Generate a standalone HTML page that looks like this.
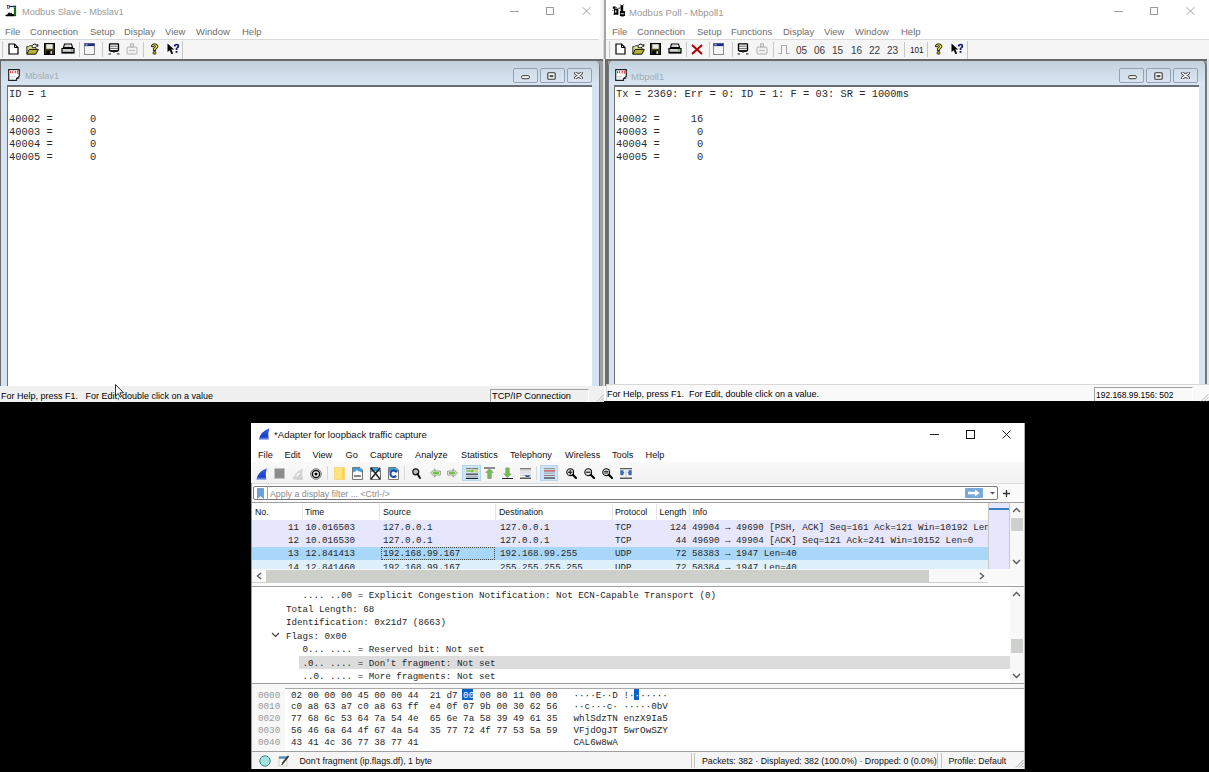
<!DOCTYPE html>
<html><head><meta charset="utf-8">
<style>
*{margin:0;padding:0;box-sizing:border-box}
html,body{width:1209px;height:772px;overflow:hidden;background:#000}
body{position:relative;font-family:"Liberation Sans",sans-serif;}
.a{position:absolute}
.t{position:absolute;white-space:pre;line-height:1}
.mono{font-family:"Liberation Mono",monospace}
.win{position:absolute;background:#fff;overflow:hidden}
.ttl{color:#9a9a9a;font-size:9.3px}
.menu{color:#6e6e6e;font-size:9.5px}
.tb{background:#f5f5f5}
.sep{position:absolute;width:1px;background:#c8c8c8}
.mdibtn{position:absolute;width:25px;height:15px;border:1px solid #93a3b5;border-radius:2px;background:linear-gradient(#cfdbe7,#d9e5f1)}
.reg{font-size:10.4px;color:#2b2b2b}
.stat{font-size:9px;color:#000}
.wsm{font-size:9.2px;color:#111}
.wsh{font-size:8.8px;color:#111}
.hs{top:504px;width:1px;height:16px;background:#e4e4e4}
.wsr{font-family:"Liberation Mono",monospace;font-size:9.2px;color:#262626}
.wss{font-size:8.8px;color:#111}
</style></head><body>

<!-- ================= MODBUS SLAVE ================= -->
<div class="win" style="left:0;top:0;width:604px;height:402px;">
  <!-- title bar -->
  <div class="t ttl" style="left:22px;top:7.8px;">Modbus Slave - Mbslav1</div>
  <!-- title buttons -->
  <div class="a" style="left:510px;top:11px;width:9px;height:1px;background:#a0a0a0"></div>
  <div class="a" style="left:546px;top:7px;width:8px;height:8px;border:1px solid #9a9a9a"></div>
  <svg class="a" style="left:582px;top:7px" width="9" height="8"><path d="M0.5 0.2L8.5 7.8M8.5 0.2L0.5 7.8" stroke="#9a9a9a" stroke-width="0.9"/></svg>
  <!-- menu -->
  <div class="t menu" style="left:5px;top:26.8px;">File</div>
  <div class="t menu" style="left:30px;top:26.8px;">Connection</div>
  <div class="t menu" style="left:90px;top:26.8px;">Setup</div>
  <div class="t menu" style="left:124px;top:26.8px;">Display</div>
  <div class="t menu" style="left:165px;top:26.8px;">View</div>
  <div class="t menu" style="left:196px;top:26.8px;">Window</div>
  <div class="t menu" style="left:242px;top:26.8px;">Help</div>
  <div class="a" style="left:0;top:39px;width:604px;height:1px;background:#dadada"></div>
  <!-- toolbar -->
  <div class="a tb" style="left:0;top:40px;width:604px;height:19px;"></div>
  <div class="sep" style="left:2px;top:41px;height:17px"></div>
  <div class="sep" style="left:79px;top:42px;height:15px"></div>
  <div class="sep" style="left:102px;top:42px;height:15px"></div>
  <div class="sep" style="left:143px;top:42px;height:15px"></div>
  <div class="sep" style="left:182px;top:41px;height:18px"></div>
  <!-- MDI area -->
  <div class="a" style="left:0;top:59px;width:604px;height:327px;background:#a0a0a0;border-top:2px solid #6a6a6a"></div>
  <div class="a" style="left:0;top:61px;width:600px;height:325px;background:#d6e4f1;border-right:1px solid #70777d;border-radius:0 5px 0 0"></div>
  <div class="a" style="left:0;top:61px;width:599px;height:24px;background:linear-gradient(#c3d1dd,#d9e6f3);border-radius:0 5px 0 0"></div>
  <div class="a" style="left:0;top:59px;width:1px;height:327px;background:#6a6a6a"></div>
  <div class="a" style="left:603px;top:40px;width:1px;height:346px;background:#d8d8d8"></div>
  <div class="t ttl" style="left:25px;top:72.2px;color:#a4acb4;font-size:9.15px">Mbslav1</div>
  <div class="mdibtn" style="left:513px;top:68px;"></div>
  <div class="mdibtn" style="left:540px;top:68px;"></div>
  <div class="mdibtn" style="left:567px;top:68px;"></div>
  <!-- client -->
  <div class="a" style="left:7px;top:85px;width:585px;height:301px;background:#fff;border-top:2px solid #6b6f74;border-left:1px solid #6b6f74"></div>
  <div class="t mono reg" style="left:9px;top:89px;">ID = 1</div>
  <div class="t mono reg" style="left:9px;top:114px;">40002 =      0</div>
  <div class="t mono reg" style="left:9px;top:127px;">40003 =      0</div>
  <div class="t mono reg" style="left:9px;top:139px;">40004 =      0</div>
  <div class="t mono reg" style="left:9px;top:152px;">40005 =      0</div>
  <!-- status bar -->
  <div class="a" style="left:0;top:386px;width:604px;height:16px;background:#f0f0f0"></div>
  <div class="t stat" style="left:1px;top:392px;">For Help, press F1.   For Edit, double click on a value</div>
  <div class="a" style="left:490px;top:389px;width:99px;height:13px;border-top:1px solid #a0a0a0;border-left:1px solid #a0a0a0;border-right:1px solid #fff"></div>
  <div class="t stat" style="left:492px;top:392px;font-size:9.25px">TCP/IP Connection</div>
</div>

<svg class="a" style="left:5px;top:5px" width="12" height="12" viewBox="0 0 12 12"><rect x="2.5" y="0.6" width="1.8" height="2.6" fill="#c8d8d0" stroke="#222" stroke-width="0.6"/><path d="M4.3 1.5H9" stroke="#1a1a80" stroke-width="1.2"/><rect x="8.9" y="0.6" width="2.2" height="10.6" fill="#0a5a10"/><path d="M10 2V10" stroke="#7c7" stroke-width="0.7" stroke-dasharray="1 1.2"/><path d="M0 10.3L2.6 9.2L4.2 7L5.1 8.4L6.2 7.6L7 8.8L9 9.3V11.2H1.2Z" fill="#000"/></svg><svg class="a" style="left:8px;top:43px" width="11" height="12" viewBox="0 0 11 12"><path d="M1 1H6.5L10 4.5V11H1Z" fill="#fff" stroke="#000" stroke-width="1.2"/><path d="M6.5 1V4.5H10" fill="none" stroke="#000" stroke-width="1"/></svg><svg class="a" style="left:26px;top:43px" width="13" height="12" viewBox="0 0 13 12"><path d="M0.8 11V3.6H2.6L3.5 2.7H6.2V4.6H10V6.2" fill="#e4e48a" stroke="#222" stroke-width="0.9"/><path d="M0.8 11.2L3.2 6.4H12.4L9.8 11.2Z" fill="#b4b436" stroke="#111" stroke-width="1"/><path d="M6.3 2.4Q8 0.2 10.2 1.4L11.2 2.8" fill="none" stroke="#111" stroke-width="1"/><path d="M9.7 3L12 3.3L11.7 1" fill="none" stroke="#111" stroke-width="0.9"/></svg><svg class="a" style="left:44px;top:43px" width="11" height="12" viewBox="0 0 11 12"><rect x="0.6" y="0.6" width="9.8" height="10.8" fill="#4a4a10" stroke="#000" stroke-width="1.2"/><rect x="2.3" y="1.2" width="6.4" height="4.6" fill="#e8e8e8"/><rect x="2.3" y="7.5" width="6" height="3.9" fill="#000"/><rect x="6.4" y="8.2" width="1.6" height="2.6" fill="#ddd"/></svg><svg class="a" style="left:61px;top:43px" width="14" height="12" viewBox="0 0 14 12"><path d="M3.5 1H10.5L11.5 4.5H2.5Z" fill="#fff" stroke="#000" stroke-width="1.1"/><path d="M1 5.5H13V10H1Z" fill="#d0d0d0" stroke="#000" stroke-width="1.2"/><path d="M1 9.5H13" stroke="#000" stroke-width="1.4"/><path d="M4 3H9" stroke="#888" stroke-width="0.8"/><rect x="10" y="6.5" width="1.5" height="1" fill="#0a0"/></svg><svg class="a" style="left:84px;top:43px" width="11" height="12" viewBox="0 0 11 12"><rect x="0.5" y="0.5" width="10" height="11" fill="#f4f4f4" stroke="#8a8a8a" stroke-width="1"/><rect x="0.5" y="0.5" width="10" height="2.6" fill="#1c2a8c"/><rect x="1.5" y="1.4" width="2" height="0.9" fill="#fff"/></svg><svg class="a" style="left:107px;top:43px" width="14" height="12" viewBox="0 0 14 12"><rect x="2.5" y="0.8" width="9" height="7" rx="0.5" fill="#eee" stroke="#000" stroke-width="1.3"/><path d="M3 3.3H11M3 5.5H11" stroke="#7a7a7a" stroke-width="1.1"/><path d="M3.5 8.2H10.5" stroke="#000" stroke-width="1.4"/><path d="M6 9.2H8" stroke="#555" stroke-width="1"/><rect x="1.5" y="10.4" width="2.5" height="1.1" fill="#333"/><rect x="10" y="10.4" width="2.5" height="1.1" fill="#333"/></svg><svg class="a" style="left:126px;top:43px" width="12" height="12" viewBox="0 0 12 12"><rect x="1" y="4" width="10" height="7" rx="1" fill="#f2f2f2" stroke="#b0b0b0" stroke-width="1"/><rect x="4.5" y="0.8" width="3" height="3.2" fill="#e0e0e0" stroke="#b0b0b0" stroke-width="0.9"/><path d="M3 7.5H9" stroke="#c0c0c0" stroke-width="1.2"/></svg><svg class="a" style="left:150px;top:43px" width="9" height="12" viewBox="0 0 9 12"><path d="M1.3 3.6Q1.3 0.8 4.5 0.8Q7.8 0.8 7.8 3.5Q7.8 5.2 5.6 6.3V7.6H3.4V5.4Q5.4 4.6 5.4 3.6Q5.4 2.6 4.5 2.6Q3.6 2.6 3.6 3.8Z" fill="#e8e840" stroke="#000" stroke-width="0.9"/><rect x="3.2" y="8.7" width="2.6" height="2.4" rx="0.6" fill="#e8e840" stroke="#000" stroke-width="0.9"/></svg><svg class="a" style="left:167px;top:43px" width="13" height="12" viewBox="0 0 13 12"><path d="M0.5 0.5V9L2.6 7.2L4.6 11.3L6.2 10.5L4.3 6.6H7.2Z" fill="#000"/><path d="M6.8 3.4Q6.8 0.8 9.5 0.8Q12.2 0.8 12.2 3.2Q12.2 4.8 10.4 5.6V7H8.7V4.9Q10.4 4.2 10.4 3.2Q10.4 2.3 9.5 2.3Q8.6 2.3 8.6 3.5Z" fill="#1a1a80"/><rect x="8.6" y="8" width="1.9" height="1.8" fill="#1a1a80"/></svg><svg class="a" style="left:8px;top:69px" width="12" height="12" viewBox="0 0 12 12"><path d="M0.7 0.7H11.3V7.3L8.5 9.8V11.3H0.7Z" fill="#fff" stroke="#222" stroke-width="1.2"/><path d="M8.5 11.3V9.2H11.3" fill="none" stroke="#222" stroke-width="1"/><path d="M2 2.2H2.9V4.2H2Z" fill="#e02030"/><path d="M5.2 2.2L3.8 3.2L5.2 4.2M8 2.2L6.6 3.2L8 4.2M10.6 2.2H9.4V4.2H10.6" fill="none" stroke="#e02030" stroke-width="0.9"/><path d="M2 7.5H7M2 9H6" stroke="#c8c8c8" stroke-width="0.7"/></svg><svg class="a" style="left:521px;top:75px" width="9" height="5" viewBox="0 0 9 5"><rect x="0.7" y="0.7" width="7.6" height="3" rx="1" fill="#fff" stroke="#333" stroke-width="1"/></svg><svg class="a" style="left:547px;top:72px" width="9" height="8" viewBox="0 0 9 8"><rect x="0.8" y="0.8" width="7.4" height="6.4" rx="1" fill="#fff" stroke="#333" stroke-width="1.1"/><rect x="2.6" y="3" width="3.8" height="2.2" fill="#555"/></svg><svg class="a" style="left:574px;top:72px" width="9" height="7" viewBox="0 0 9 7"><path d="M1.5 1L7.5 6M7.5 1L1.5 6" stroke="#444" stroke-width="3.2" stroke-linecap="round"/><path d="M1.5 1L7.5 6M7.5 1L1.5 6" stroke="#fff" stroke-width="1.6" stroke-linecap="round"/></svg><svg class="a" style="left:595px;top:392px" width="10" height="10" viewBox="0 0 10 10"><path d="M9.5 2L2 9.5M9.5 5L5 9.5M9.5 8L8 9.5" stroke="#b0b0b0" stroke-width="0.9"/></svg>
<!-- ================= MODBUS POLL ================= -->
<div class="win" style="left:604px;top:0;width:605px;height:401px;">
  <div class="t ttl" style="left:25px;top:7.6px;font-size:9.55px">Modbus Poll - Mbpoll1</div>
  <div class="a" style="left:510px;top:11px;width:9px;height:1px;background:#a0a0a0"></div>
  <div class="a" style="left:546px;top:7px;width:8px;height:8px;border:1px solid #9a9a9a"></div>
  <svg class="a" style="left:582px;top:7px" width="9" height="8"><path d="M0.5 0.2L8.5 7.8M8.5 0.2L0.5 7.8" stroke="#9a9a9a" stroke-width="0.9"/></svg>
  <div class="t menu" style="left:8px;top:26.8px;">File</div>
  <div class="t menu" style="left:33px;top:26.8px;">Connection</div>
  <div class="t menu" style="left:93px;top:26.8px;">Setup</div>
  <div class="t menu" style="left:127px;top:26.8px;">Functions</div>
  <div class="t menu" style="left:179px;top:26.8px;">Display</div>
  <div class="t menu" style="left:220px;top:26.8px;">View</div>
  <div class="t menu" style="left:251px;top:26.8px;">Window</div>
  <div class="t menu" style="left:297px;top:26.8px;">Help</div>
  <div class="a" style="left:0;top:39px;width:605px;height:1px;background:#dadada"></div>
  <div class="a tb" style="left:0;top:40px;width:605px;height:19px;"></div>
  <div class="sep" style="left:5px;top:41px;height:17px"></div>
  <div class="sep" style="left:82px;top:42px;height:15px"></div>
  <div class="sep" style="left:105px;top:42px;height:15px"></div>
  <div class="sep" style="left:128px;top:42px;height:15px"></div>
  <div class="sep" style="left:169px;top:42px;height:15px"></div>
  <div class="sep" style="left:300px;top:42px;height:15px"></div>
  <div class="sep" style="left:323px;top:42px;height:15px"></div>
  <div class="sep" style="left:363px;top:41px;height:18px"></div>
  <div class="t" style="left:191.9px;top:44.5px;font-size:11.4px;color:#3a3a3a;transform:scaleX(0.88);transform-origin:0 0">05</div>
  <div class="t" style="left:209.8px;top:44.5px;font-size:11.4px;color:#3a3a3a;transform:scaleX(0.88);transform-origin:0 0">06</div>
  <div class="t" style="left:228.4px;top:44.5px;font-size:11.4px;color:#3a3a3a;transform:scaleX(0.88);transform-origin:0 0">15</div>
  <div class="t" style="left:247.0px;top:44.5px;font-size:11.4px;color:#3a3a3a;transform:scaleX(0.88);transform-origin:0 0">16</div>
  <div class="t" style="left:264.8px;top:44.5px;font-size:11.4px;color:#3a3a3a;transform:scaleX(0.88);transform-origin:0 0">22</div>
  <div class="t" style="left:282.7px;top:44.5px;font-size:11.4px;color:#3a3a3a;transform:scaleX(0.88);transform-origin:0 0">23</div>
  <div class="t" style="left:306px;top:46px;font-size:8.6px;color:#111;font-weight:normal;transform:scaleX(0.95);transform-origin:0 0">101</div>
  <!-- MDI -->
  <div class="a" style="left:0;top:59px;width:605px;height:327px;background:#a0a0a0;border-top:2px solid #6a6a6a"></div>
  <div class="a" style="left:0;top:59px;width:1px;height:327px;background:#e6e6e6"></div>
  <div class="a" style="left:1px;top:59px;width:3px;height:327px;background:#6a6a6a"></div>
  <div class="a" style="left:4px;top:61px;width:599px;height:325px;background:#d6e4f1;border-left:1px solid #70777d;border-right:2px solid #70777d;border-radius:5px 5px 0 0"></div>
  <div class="a" style="left:5px;top:61px;width:596px;height:24px;background:linear-gradient(#c3d1dd,#d9e6f3);border-radius:5px 5px 0 0"></div>
  <div class="a" style="left:603px;top:59px;width:2px;height:327px;background:#e6e6e6"></div>
  <div class="t ttl" style="left:27px;top:71.8px;color:#a4acb4;font-size:9.5px">Mbpoll1</div>
  <div class="mdibtn" style="left:515px;top:68px;"></div>
  <div class="mdibtn" style="left:542px;top:68px;"></div>
  <div class="mdibtn" style="left:569px;top:68px;"></div>
  <div class="a" style="left:10px;top:85px;width:585px;height:301px;background:#fff;border-top:2px solid #6b6f74;border-left:1px solid #6b6f74"></div>
  <div class="t mono reg" style="left:12px;top:89px;">Tx = 2369: Err = 0: ID = 1: F = 03: SR = 1000ms</div>
  <div class="t mono reg" style="left:12px;top:114px;">40002 =     16</div>
  <div class="t mono reg" style="left:12px;top:127px;">40003 =      0</div>
  <div class="t mono reg" style="left:12px;top:139px;">40004 =      0</div>
  <div class="t mono reg" style="left:12px;top:152px;">40005 =      0</div>
  <div class="a" style="left:1.5px;top:384px;width:604px;height:18px;background:#f9f9f9;border-top:1px solid #d8d8d8;border-left:1px solid #d8d8d8"></div>
  <div class="t stat" style="left:3px;top:390px;">For Help, press F1.  For Edit, double click on a value.</div>
  <div class="a" style="left:490px;top:387px;width:99px;height:15px;border-top:1px solid #a0a0a0;border-left:1px solid #a0a0a0;border-right:1px solid #fff"></div>
  <div class="t stat" style="left:492px;top:390px;font-size:9.4px;transform:scaleX(0.9);transform-origin:0 0">192.168.99.156: 502</div>
</div>

<div class="a" style="left:604px;top:0;width:2px;height:59px;background:#a4a4a4"></div><div class="a" style="left:599px;top:0;width:5px;height:40px;background:linear-gradient(90deg,#fff,#ececec)"></div>
<svg class="a" style="left:115px;top:384px" width="9" height="14" viewBox="0 0 9 14"><path d="M0.5 0.5V12L3.2 9.4L5 13.2L6.6 12.5L4.9 8.8H8.5Z" fill="#fff" stroke="#000" stroke-width="0.8"/></svg>
<svg class="a" style="left:611.5px;top:3.5px" width="14" height="14" viewBox="0 0 14 14"><rect x="0.8" y="2.5" width="2.6" height="2.3" fill="#000"/><rect x="0.4" y="6" width="0.9" height="0.9" fill="#000"/><path d="M2 4.8H6.4V10.8H1.4V9.7H2Z" fill="#000"/><rect x="3.1" y="6.3" width="1.3" height="2.2" fill="#fff"/><path d="M3.2 2.6L5.2 4.6" stroke="#000" stroke-width="0.9"/><path d="M6.3 4.4L8.5 3.8" stroke="#000" stroke-width="0.9"/><rect x="8.6" y="1.2" width="2.6" height="6.4" fill="#000"/><path d="M8 0.4L8.8 1.4M11.8 0.4L11 1.4" stroke="#000" stroke-width="0.9"/><rect x="7.9" y="7.1" width="5.1" height="4.9" rx="0.6" fill="#000"/><rect x="8.6" y="9.3" width="3.7" height="1" fill="#ddd"/><rect x="8.8" y="12" width="3.2" height="0.9" fill="#888"/></svg><svg class="a" style="left:615px;top:43px" width="11" height="12" viewBox="0 0 11 12"><path d="M1 1H6.5L10 4.5V11H1Z" fill="#fff" stroke="#000" stroke-width="1.2"/><path d="M6.5 1V4.5H10" fill="none" stroke="#000" stroke-width="1"/></svg><svg class="a" style="left:632px;top:43px" width="13" height="12" viewBox="0 0 13 12"><path d="M0.8 11V3.6H2.6L3.5 2.7H6.2V4.6H10V6.2" fill="#e4e48a" stroke="#222" stroke-width="0.9"/><path d="M0.8 11.2L3.2 6.4H12.4L9.8 11.2Z" fill="#b4b436" stroke="#111" stroke-width="1"/><path d="M6.3 2.4Q8 0.2 10.2 1.4L11.2 2.8" fill="none" stroke="#111" stroke-width="1"/><path d="M9.7 3L12 3.3L11.7 1" fill="none" stroke="#111" stroke-width="0.9"/></svg><svg class="a" style="left:650px;top:43px" width="11" height="12" viewBox="0 0 11 12"><rect x="0.6" y="0.6" width="9.8" height="10.8" fill="#4a4a10" stroke="#000" stroke-width="1.2"/><rect x="2.3" y="1.2" width="6.4" height="4.6" fill="#e8e8e8"/><rect x="2.3" y="7.5" width="6" height="3.9" fill="#000"/><rect x="6.4" y="8.2" width="1.6" height="2.6" fill="#ddd"/></svg><svg class="a" style="left:668px;top:43px" width="14" height="12" viewBox="0 0 14 12"><path d="M3.5 1H10.5L11.5 4.5H2.5Z" fill="#fff" stroke="#000" stroke-width="1.1"/><path d="M1 5.5H13V10H1Z" fill="#d0d0d0" stroke="#000" stroke-width="1.2"/><path d="M1 9.5H13" stroke="#000" stroke-width="1.4"/><path d="M4 3H9" stroke="#888" stroke-width="0.8"/><rect x="10" y="6.5" width="1.5" height="1" fill="#0a0"/></svg><svg class="a" style="left:691px;top:44px" width="12" height="11" viewBox="0 0 12 11"><path d="M1 1L11 10M11 1L1 10" stroke="#b00000" stroke-width="2"/></svg><svg class="a" style="left:713px;top:43px" width="11" height="12" viewBox="0 0 11 12"><rect x="0.5" y="0.5" width="10" height="11" fill="#f4f4f4" stroke="#8a8a8a" stroke-width="1"/><rect x="0.5" y="0.5" width="10" height="2.6" fill="#1c2a8c"/><rect x="1.5" y="1.4" width="2" height="0.9" fill="#fff"/></svg><svg class="a" style="left:736px;top:43px" width="14" height="12" viewBox="0 0 14 12"><rect x="2.5" y="0.8" width="9" height="7" rx="0.5" fill="#eee" stroke="#000" stroke-width="1.3"/><path d="M3 3.3H11M3 5.5H11" stroke="#7a7a7a" stroke-width="1.1"/><path d="M3.5 8.2H10.5" stroke="#000" stroke-width="1.4"/><path d="M6 9.2H8" stroke="#555" stroke-width="1"/><rect x="1.5" y="10.4" width="2.5" height="1.1" fill="#333"/><rect x="10" y="10.4" width="2.5" height="1.1" fill="#333"/></svg><svg class="a" style="left:756px;top:43px" width="12" height="12" viewBox="0 0 12 12"><rect x="1" y="4" width="10" height="7" rx="1" fill="#f2f2f2" stroke="#b0b0b0" stroke-width="1"/><rect x="4.5" y="0.8" width="3" height="3.2" fill="#e0e0e0" stroke="#b0b0b0" stroke-width="0.9"/><path d="M3 7.5H9" stroke="#c0c0c0" stroke-width="1.2"/></svg><svg class="a" style="left:778px;top:44px" width="12" height="11" viewBox="0 0 12 11"><path d="M0.5 9.5H3.5V1.5H8.5V9.5H11.5" fill="none" stroke="#a8a8a8" stroke-width="1.1"/></svg><svg class="a" style="left:934px;top:43px" width="9" height="12" viewBox="0 0 9 12"><path d="M1.3 3.6Q1.3 0.8 4.5 0.8Q7.8 0.8 7.8 3.5Q7.8 5.2 5.6 6.3V7.6H3.4V5.4Q5.4 4.6 5.4 3.6Q5.4 2.6 4.5 2.6Q3.6 2.6 3.6 3.8Z" fill="#e8e840" stroke="#000" stroke-width="0.9"/><rect x="3.2" y="8.7" width="2.6" height="2.4" rx="0.6" fill="#e8e840" stroke="#000" stroke-width="0.9"/></svg><svg class="a" style="left:951px;top:43px" width="13" height="12" viewBox="0 0 13 12"><path d="M0.5 0.5V9L2.6 7.2L4.6 11.3L6.2 10.5L4.3 6.6H7.2Z" fill="#000"/><path d="M6.8 3.4Q6.8 0.8 9.5 0.8Q12.2 0.8 12.2 3.2Q12.2 4.8 10.4 5.6V7H8.7V4.9Q10.4 4.2 10.4 3.2Q10.4 2.3 9.5 2.3Q8.6 2.3 8.6 3.5Z" fill="#1a1a80"/><rect x="8.6" y="8" width="1.9" height="1.8" fill="#1a1a80"/></svg><svg class="a" style="left:615px;top:69px" width="12" height="12" viewBox="0 0 12 12"><path d="M0.7 0.7H11.3V7.3L8.5 9.8V11.3H0.7Z" fill="#fff" stroke="#222" stroke-width="1.2"/><path d="M8.5 11.3V9.2H11.3" fill="none" stroke="#222" stroke-width="1"/><path d="M2 2.2H2.9V4.2H2Z" fill="#e02030"/><path d="M5.2 2.2L3.8 3.2L5.2 4.2M8 2.2L6.6 3.2L8 4.2M10.6 2.2H9.4V4.2H10.6" fill="none" stroke="#e02030" stroke-width="0.9"/><path d="M2 7.5H7M2 9H6" stroke="#c8c8c8" stroke-width="0.7"/></svg><svg class="a" style="left:1128px;top:75px" width="9" height="5" viewBox="0 0 9 5"><rect x="0.7" y="0.7" width="7.6" height="3" rx="1" fill="#fff" stroke="#333" stroke-width="1"/></svg><svg class="a" style="left:1154px;top:72px" width="9" height="8" viewBox="0 0 9 8"><rect x="0.8" y="0.8" width="7.4" height="6.4" rx="1" fill="#fff" stroke="#333" stroke-width="1.1"/><rect x="2.6" y="3" width="3.8" height="2.2" fill="#555"/></svg><svg class="a" style="left:1181px;top:72px" width="9" height="7" viewBox="0 0 9 7"><path d="M1.5 1L7.5 6M7.5 1L1.5 6" stroke="#444" stroke-width="3.2" stroke-linecap="round"/><path d="M1.5 1L7.5 6M7.5 1L1.5 6" stroke="#fff" stroke-width="1.6" stroke-linecap="round"/></svg><svg class="a" style="left:1199px;top:392px" width="10" height="10" viewBox="0 0 10 10"><path d="M9.5 2L2 9.5M9.5 5L5 9.5M9.5 8L8 9.5" stroke="#b0b0b0" stroke-width="0.9"/></svg>
<!-- ================= WIRESHARK ================= -->
<div class="a" style="left:251px;top:423px;width:774px;height:346px;background:#fff"></div>
<div class="t" style="left:274px;top:430px;font-size:9.6px;color:#111">*Adapter for loopback traffic capture</div>
<div class="a" style="left:930px;top:434px;width:8.5px;height:1px;background:#222"></div>
<div class="a" style="left:966px;top:430px;width:8.5px;height:8.5px;border:1px solid #111"></div>
<svg class="a" style="left:1002px;top:430px" width="9" height="9"><path d="M0.5 0.5L8.5 8.5M8.5 0.5L0.5 8.5" stroke="#222" stroke-width="1"/></svg>
<!-- menu -->
<div class="t wsm" style="left:258px;top:451px">File</div>
<div class="t wsm" style="left:284.5px;top:451px">Edit</div>
<div class="t wsm" style="left:312.5px;top:451px">View</div>
<div class="t wsm" style="left:345.5px;top:451px">Go</div>
<div class="t wsm" style="left:370px;top:451px">Capture</div>
<div class="t wsm" style="left:415px;top:451px">Analyze</div>
<div class="t wsm" style="left:461px;top:451px">Statistics</div>
<div class="t wsm" style="left:510px;top:451px">Telephony</div>
<div class="t wsm" style="left:565px;top:451px">Wireless</div>
<div class="t wsm" style="left:612px;top:451px">Tools</div>
<div class="t wsm" style="left:645.5px;top:451px">Help</div>
<!-- toolbar -->
<div class="a" style="left:251px;top:462px;width:774px;height:22px;background:linear-gradient(#f9f9f9,#f2f2f2)"></div>
<div class="a" style="left:462px;top:465px;width:19px;height:16px;background:#cce4f7;border:1px solid #b5d5ee"></div>
<div class="a" style="left:540px;top:465px;width:18px;height:16px;background:#cce4f7;border:1px solid #b5d5ee"></div>
<div class="sep" style="left:327px;top:466px;height:14px;background:#d8d8d8"></div>
<div class="sep" style="left:404px;top:466px;height:14px;background:#d8d8d8"></div>
<div class="sep" style="left:536px;top:466px;height:14px;background:#d8d8d8"></div>
<!-- filter -->
<div class="a" style="left:251px;top:483px;width:774px;height:20px;background:#fbfbfb;border-top:1px solid #dadada"></div>
<div class="a" style="left:253px;top:486px;width:745px;height:14px;background:#fff;border:1px solid #7a7a7a;border-radius:2px"></div>
<div class="a" style="left:267px;top:486px;width:1px;height:14px;background:#a0a0a0"></div>
<div class="t" style="left:270px;top:489.5px;font-size:8.8px;color:#8a8a8a">Apply a display filter ... &lt;Ctrl-/&gt;</div>
<div class="a" style="left:964.5px;top:488px;width:18.5px;height:10px;background:#7aa8d8;border-radius:1px"></div><svg class="a" style="left:967px;top:489px" width="14" height="8" viewBox="0 0 14 8"><path d="M1 2.8H8V0.6L12.6 4L8 7.4V5.2H1Z" fill="#fff"/></svg><svg class="a" style="left:989.5px;top:491.5px" width="6" height="3" viewBox="0 0 6 3"><path d="M0 0H5L2.5 2.6Z" fill="#555"/></svg>
<svg class="a" style="left:1002.5px;top:489.5px" width="7" height="7" viewBox="0 0 7 7"><path d="M3.5 0V7M0 3.5H7" stroke="#333" stroke-width="1.3"/></svg>
<div class="a" style="left:251px;top:502px;width:774px;height:1px;background:#a0a0a0"></div>
<!-- packet list header -->
<div class="a" style="left:251px;top:503px;width:737px;height:17px;background:#fff"></div>
<div class="t wsh" style="left:255px;top:508px">No.</div>
<div class="t wsh" style="left:305px;top:508px">Time</div>
<div class="t wsh" style="left:383px;top:508px">Source</div>
<div class="t wsh" style="left:499px;top:508px">Destination</div>
<div class="t wsh" style="left:615px;top:508px">Protocol</div>
<div class="t wsh" style="left:659.5px;top:508px">Length</div>
<div class="t wsh" style="left:692.5px;top:508px">Info</div>
<div class="a hs" style="left:302px"></div>
<div class="a hs" style="left:379px"></div>
<div class="a hs" style="left:495px"></div>
<div class="a hs" style="left:612px"></div>
<div class="a hs" style="left:656px"></div>
<div class="a hs" style="left:689px"></div>
<!-- rows -->
<div class="a" style="left:252px;top:520px;width:736px;height:27px;background:#e6e6fc"></div>
<div class="a" style="left:252px;top:547px;width:736px;height:13px;background:#a9d7f9"></div>
<div class="a" style="left:252px;top:560px;width:736px;height:9px;background:#ddf0fb"></div>
<div class="a" style="left:381px;top:547px;width:114px;height:13px;border:1px dotted #444"></div>
<div class="a" style="left:252px;top:520px;width:736px;height:49px;overflow:hidden">
  <div class="t wsr" style="right:689px;top:2.5px">11</div>
  <div class="t wsr" style="left:53.4px;top:2.5px">10.016503</div>
  <div class="t wsr" style="left:131px;top:2.5px">127.0.0.1</div>
  <div class="t wsr" style="left:248px;top:2.5px">127.0.0.1</div>
  <div class="t wsr" style="left:363px;top:2.5px">TCP</div>
  <div class="t wsr" style="right:301.5px;top:2.5px">124</div>
  <div class="t wsr" style="left:440px;top:2.5px">49904 → 49690 [PSH, ACK] Seq=161 Ack=121 Win=10192 Len=40</div>
  <div class="t wsr" style="right:689px;top:15.9px">12</div>
  <div class="t wsr" style="left:53.4px;top:15.9px">10.016530</div>
  <div class="t wsr" style="left:131px;top:15.9px">127.0.0.1</div>
  <div class="t wsr" style="left:248px;top:15.9px">127.0.0.1</div>
  <div class="t wsr" style="left:363px;top:15.9px">TCP</div>
  <div class="t wsr" style="right:301.5px;top:15.9px">44</div>
  <div class="t wsr" style="left:440px;top:15.9px">49690 → 49904 [ACK] Seq=121 Ack=241 Win=10152 Len=0</div>
  <div class="t wsr" style="right:689px;top:29.3px">13</div>
  <div class="t wsr" style="left:53.4px;top:29.3px">12.841413</div>
  <div class="t wsr" style="left:131px;top:29.3px">192.168.99.167</div>
  <div class="t wsr" style="left:248px;top:29.3px">192.168.99.255</div>
  <div class="t wsr" style="left:363px;top:29.3px">UDP</div>
  <div class="t wsr" style="right:301.5px;top:29.3px">72</div>
  <div class="t wsr" style="left:440px;top:29.3px">58383 → 1947 Len=40</div>
  <div class="t wsr" style="right:689px;top:42.7px">14</div>
  <div class="t wsr" style="left:53.4px;top:42.7px">12.841460</div>
  <div class="t wsr" style="left:131px;top:42.7px">192.168.99.167</div>
  <div class="t wsr" style="left:248px;top:42.7px">255.255.255.255</div>
  <div class="t wsr" style="left:363px;top:42.7px">UDP</div>
  <div class="t wsr" style="right:301.5px;top:42.7px">72</div>
  <div class="t wsr" style="left:440px;top:42.7px">58384 → 1947 Len=40</div>
</div>
<!-- packet list vscroll / minimap -->
<div class="a" style="left:988px;top:503px;width:22px;height:66px;background:#e6e6fc;border-left:1px solid #c8c8c8;border-right:1px solid #c8c8c8"></div>
<div class="a" style="left:989px;top:508px;width:20px;height:2px;background:#3b7fc4"></div>
<div class="a" style="left:1010px;top:503px;width:14px;height:66px;background:#f8f8f8"></div>
<div class="a" style="left:1011px;top:518px;width:12px;height:13px;background:#cdd0cd"></div>
<svg class="a" style="left:1012px;top:507px" width="9" height="6"><path d="M1 5L4.5 1.5L8 5" fill="none" stroke="#555" stroke-width="1.3"/></svg>
<svg class="a" style="left:1012px;top:559px" width="9" height="6"><path d="M1 1L4.5 4.5L8 1" fill="none" stroke="#555" stroke-width="1.3"/></svg>
<!-- hscroll -->
<div class="a" style="left:252px;top:569px;width:736px;height:14px;background:#f9f9f9"></div>
<div class="a" style="left:266px;top:570px;width:663px;height:12px;background:#cdcfcb"></div><div class="a" style="left:252px;top:582px;width:736px;height:1px;background:#cfcfcf"></div>
<svg class="a" style="left:256px;top:572px" width="6" height="8"><path d="M5 1L1.5 4L5 7" fill="none" stroke="#555" stroke-width="1.3"/></svg>
<svg class="a" style="left:979px;top:572px" width="6" height="8"><path d="M1 1L4.5 4L1 7" fill="none" stroke="#555" stroke-width="1.3"/></svg>
<div class="a" style="left:988px;top:569px;width:36px;height:14px;background:#f9f9f9"></div>
<!-- splitter -->
<div class="a" style="left:251px;top:583px;width:774px;height:4px;background:#fbfbfb"></div>
<div class="a" style="left:251px;top:586px;width:774px;height:1px;background:#a0a0a0"></div>
<!-- details pane -->
<div class="a" style="left:299px;top:655.5px;width:711px;height:13.5px;background:#dcdcdc"></div>
<div class="t wsr" style="left:302.5px;top:591px">.... ..00 = Explicit Congestion Notification: Not ECN-Capable Transport (0)</div>
<div class="t wsr" style="left:286px;top:604.5px">Total Length: 68</div>
<div class="t wsr" style="left:286px;top:618px">Identification: 0x21d7 (8663)</div>
<div class="t wsr" style="left:286px;top:631.5px">Flags: 0x00</div>
<div class="t wsr" style="left:302.5px;top:645px">0... .... = Reserved bit: Not set</div>
<div class="t wsr" style="left:302.5px;top:658.5px">.0.. .... = Don't fragment: Not set</div>
<div class="t wsr" style="left:302.5px;top:672px">..0. .... = More fragments: Not set</div>
<svg class="a" style="left:271px;top:632px" width="9" height="6"><path d="M1 1L4.5 4.5L8 1" fill="none" stroke="#444" stroke-width="1.2"/></svg>
<div class="a" style="left:1010px;top:587px;width:14px;height:96px;background:#f8f8f8"></div>
<div class="a" style="left:1011px;top:639px;width:12px;height:14px;background:#cdd0cd"></div>
<svg class="a" style="left:1012px;top:591px" width="9" height="6"><path d="M1 5L4.5 1.5L8 5" fill="none" stroke="#555" stroke-width="1.3"/></svg>
<svg class="a" style="left:1012px;top:673px" width="9" height="6"><path d="M1 1L4.5 4.5L8 1" fill="none" stroke="#555" stroke-width="1.3"/></svg>
<!-- splitter 2 -->
<div class="a" style="left:251px;top:683px;width:774px;height:5px;background:#f7f7f7"></div>
<div class="a" style="left:251px;top:683px;width:774px;height:1px;background:#a0a0a0"></div>
<div class="a" style="left:251px;top:688px;width:774px;height:1px;background:#a8a8a8"></div>
<!-- hex pane -->
<div class="a" style="left:252px;top:688px;width:33px;height:63px;background:#f7f7f7"></div>
<div class="a" style="left:462px;top:689px;width:11px;height:11px;background:#0a64c8"></div>
<div class="a" style="left:634px;top:689px;width:5px;height:11px;background:#0a64c8"></div>
<div class="t wsr" style="left:258px;top:689.5px;color:#9a9a9a;line-height:11.85px;font-size:9.25px">0000<br>0010<br>0020<br>0030<br>0040</div>
<div class="t wsr" style="left:291px;top:689.5px;line-height:11.85px;font-size:9.25px">02 00 00 00 45 00 00 44  21 d7 <span style="color:#fff">00</span> 00 80 11 00 00<br>c0 a8 63 a7 c0 a8 63 ff  e4 0f 07 9b 00 30 62 56<br>77 68 6c 53 64 7a 54 4e  65 6e 7a 58 39 49 61 35<br>56 46 6a 64 4f 67 4a 54  35 77 72 4f 77 53 5a 59<br>43 41 4c 36 77 38 77 41</div>
<div class="t wsr" style="left:573.5px;top:689.5px;line-height:11.85px;font-size:9.25px">····E··D !·<span style="color:#fff">·</span>·····<br>··c···c· ·····0bV<br>whlSdzTN enzX9Ia5<br>VFjdOgJT 5wrOwSZY<br>CAL6w8wA</div>
<!-- status bar -->
<div class="a" style="left:251px;top:751px;width:774px;height:18px;background:#f5f5f5;border-top:1px solid #a0a0a0"></div>
<div class="t wss" style="left:299.5px;top:756.5px">Don’t fragment (ip.flags.df), 1 byte</div>
<div class="a" style="left:690.5px;top:753px;width:4px;height:15px;border-left:1.5px solid #c4c4c4;border-right:1.5px solid #c4c4c4"></div>
<div class="t wss" style="left:702px;top:756.5px">Packets: 382 · Displayed: 382 (100.0%) · Dropped: 0 (0.0%)</div>
<div class="a" style="left:937px;top:753px;width:5px;height:15px;border-left:1.5px solid #c4c4c4;border-right:1.5px solid #c4c4c4"></div>
<div class="t wss" style="left:948.5px;top:756.5px">Profile: Default</div>
<div class="a" style="left:1024px;top:423px;width:1px;height:346px;background:#b0b0b0"></div>
<div class="a" style="left:251px;top:483px;width:1px;height:286px;background:#9a9a9a"></div>

<svg class="a" style="left:257.5px;top:428px" width="12" height="12" viewBox="0 0 11 12"><defs><linearGradient id="fg257428" x1="0" y1="0" x2="0" y2="1"><stop offset="0" stop-color="#3a64e8"/><stop offset="0.75" stop-color="#1a3cc8"/><stop offset="1" stop-color="#8aa4f0"/></linearGradient></defs><path d="M0.3 11.7Q1.8 3.5 10.8 0.2Q9 5.5 10.3 11.7Z" fill="url(#fg257428)" opacity="1"/></svg><svg class="a" style="left:256px;top:467.5px" width="11" height="12" viewBox="0 0 11 12"><defs><linearGradient id="fg256467" x1="0" y1="0" x2="0" y2="1"><stop offset="0" stop-color="#3a64e8"/><stop offset="0.75" stop-color="#1a3cc8"/><stop offset="1" stop-color="#8aa4f0"/></linearGradient></defs><path d="M0.3 11.7Q1.8 3.5 10.8 0.2Q9 5.5 10.3 11.7Z" fill="url(#fg256467)" opacity="1"/></svg><svg class="a" style="left:274px;top:468px" width="11" height="11" viewBox="0 0 11 11"><rect x="0.5" y="0.5" width="10" height="10" fill="#8c8c8c" stroke="#c4c4c4" stroke-width="1"/></svg><svg class="a" style="left:292px;top:467.5px" width="12" height="12" viewBox="0 0 12 12"><path d="M0.5 11.5Q2.5 4 11 0.5Q9.5 5 11 11.5Z" fill="#d4d4d4"/><path d="M5 8.5Q5 5.5 8 5.5" fill="none" stroke="#fff" stroke-width="1.2"/><path d="M4.5 11H10.5" stroke="#bbb" stroke-width="0.8"/></svg><svg class="a" style="left:310px;top:467.5px" width="12" height="12" viewBox="0 0 12 12"><circle cx="6" cy="6" r="5.3" fill="#f4f4f4" stroke="#777" stroke-width="1"/><circle cx="6" cy="6" r="3.6" fill="#fff" stroke="#111" stroke-width="1.5"/><circle cx="6" cy="6" r="1.6" fill="#000"/></svg><svg class="a" style="left:334px;top:467px" width="11" height="13" viewBox="0 0 11 13"><rect x="0.5" y="0.5" width="9.8" height="12" fill="#fde47a" stroke="#f0d060" stroke-width="0.6"/><rect x="8" y="1" width="2.5" height="11.5" fill="#f6d458"/></svg><svg class="a" style="left:352px;top:467px" width="11" height="13" viewBox="0 0 11 13"><path d="M0.5 0.5H8L10.5 3V12.5H0.5Z" fill="#fbfbfb" stroke="#777" stroke-width="1"/><path d="M1 1H8L10 3V5.5Q5.5 3 1 5.5Z" fill="#3fa0e0"/><path d="M3 5L5 3L7 5" fill="#fff"/><rect x="2" y="8" width="7" height="2" fill="#888"/></svg><svg class="a" style="left:370px;top:467px" width="11" height="13" viewBox="0 0 11 13"><path d="M0.5 0.5H8L10.5 3V12.5H0.5Z" fill="#fbfbfb" stroke="#777" stroke-width="1"/><path d="M1 1H8L10 3V5Q5.5 3.5 1 5Z" fill="#3fa0e0"/><path d="M0.8 0.8L10.2 12.2M10.2 0.8L0.8 12.2" stroke="#222" stroke-width="1.5"/></svg><svg class="a" style="left:388px;top:467px" width="11" height="13" viewBox="0 0 11 13"><path d="M0.5 0.5H8L10.5 3V12.5H0.5Z" fill="#fbfbfb" stroke="#777" stroke-width="1"/><path d="M1 1H8L10 3V5Q5.5 3 1 5Z" fill="#3fa0e0"/><path d="M7.8 4.4A3.2 3.2 0 1 0 8.2 8.6" fill="none" stroke="#1d4a9a" stroke-width="2"/><path d="M6.5 3.2L9.5 3.8L8 6.4Z" fill="#1d4a9a"/></svg><svg class="a" style="left:412px;top:468px" width="9" height="11" viewBox="0 0 9 11"><circle cx="3.8" cy="3.8" r="3" fill="#bbb" stroke="#111" stroke-width="1.2"/><path d="M5.5 6L8 10" stroke="#000" stroke-width="1.8" stroke-linecap="round"/></svg><svg class="a" style="left:429.5px;top:467.5px" width="11" height="10" viewBox="0 0 11 10"><path d="M0.6 5L5 0.8V3H10.4V7H5V9.2Z" fill="#e8f4dc" stroke="#8c8c8c" stroke-width="0.8"/><path d="M0.6 5L5 0.8V3H10.4V7H5V9.2Z" fill="#72c040" transform="translate(5.5 5) scale(0.72 0.55) translate(-5.5 -5)"/></svg><svg class="a" style="left:447px;top:467.5px" width="11" height="10" viewBox="0 0 11 10"><path d="M10.4 5L6 0.8V3H0.6V7H6V9.2Z" fill="#e8f4dc" stroke="#8c8c8c" stroke-width="0.8"/><path d="M10.4 5L6 0.8V3H0.6V7H6V9.2Z" fill="#72c040" transform="translate(5.5 5) scale(0.72 0.55) translate(-5.5 -5)"/></svg><svg class="a" style="left:465px;top:466.5px" width="14" height="12" viewBox="0 0 14 12"><rect x="1" y="1" width="12" height="1.2" fill="#777"/><rect x="9.5" y="2.5" width="3.5" height="3" fill="#e0d060"/><path d="M10 4L6.2 1.6V3.1H1V4.9H6.2V6.4Z" fill="#72c040" stroke="#eee" stroke-width="0.5"/><rect x="1" y="6.5" width="12" height="1.4" fill="#555"/><rect x="1" y="8.6" width="12" height="1" fill="#a0a0a0"/><rect x="1" y="10.8" width="12" height="1.2" fill="#222"/></svg><svg class="a" style="left:484px;top:467px" width="11" height="12" viewBox="0 0 11 12"><path d="M0 1H11" stroke="#222" stroke-width="1"/><path d="M5.5 1.8L9.2 5.5H7.2V11.5H3.8V5.5H1.8Z" fill="#6cc040" stroke="#999" stroke-width="0.9"/></svg><svg class="a" style="left:502px;top:467px" width="11" height="12" viewBox="0 0 11 12"><path d="M0 11.5H11" stroke="#222" stroke-width="1"/><path d="M5.5 10.7L9.2 7H7.2V1H3.8V7H1.8Z" fill="#6cc040" stroke="#999" stroke-width="0.9"/></svg><svg class="a" style="left:520px;top:468px" width="11" height="11" viewBox="0 0 11 11"><rect x="0" y="0.3" width="11" height="1" fill="#444"/><rect x="0" y="2.5" width="11" height="0.8" fill="#bbb"/><rect x="0" y="4.5" width="11" height="0.8" fill="#cbd"/><rect x="0" y="6.8" width="11" height="0.8" fill="#bbb"/><path d="M4.5 7.2H10.5L9 9H6Z" fill="#2a5a9a"/><rect x="0" y="9.6" width="11" height="1.2" fill="#333"/></svg><svg class="a" style="left:544px;top:468px" width="11" height="11" viewBox="0 0 11 11"><rect x="0" y="0.2" width="11" height="1" fill="#888"/><rect x="0" y="2.4" width="11" height="1.1" fill="#c83030"/><rect x="0" y="4.7" width="11" height="0.9" fill="#8a9a9a"/><rect x="0" y="7" width="11" height="1" fill="#a07080"/><rect x="0" y="9.4" width="11" height="1.2" fill="#333"/></svg><svg class="a" style="left:566px;top:468px" width="11" height="11" viewBox="0 0 11 11"><circle cx="4.2" cy="4.2" r="3.4" fill="#ddd" stroke="#111" stroke-width="1.1"/><path d="M2 4.2H6.4M4.2 2V6.4" stroke="#111" stroke-width="1.1"/><path d="M6.8 6.8L10 10" stroke="#000" stroke-width="2" stroke-linecap="round"/></svg><svg class="a" style="left:584px;top:468px" width="11" height="11" viewBox="0 0 11 11"><circle cx="4.2" cy="4.2" r="3.4" fill="#ddd" stroke="#111" stroke-width="1.1"/><path d="M2 4.2H6.4" stroke="#111" stroke-width="1.1"/><path d="M6.8 6.8L10 10" stroke="#000" stroke-width="2" stroke-linecap="round"/></svg><svg class="a" style="left:602px;top:468px" width="11" height="11" viewBox="0 0 11 11"><circle cx="4.2" cy="4.2" r="3.4" fill="#ddd" stroke="#111" stroke-width="1.1"/><path d="M2.2 3.4H6.2M2.2 5H6.2" stroke="#111" stroke-width="0.9"/><path d="M6.8 6.8L10 10" stroke="#000" stroke-width="2" stroke-linecap="round"/></svg><svg class="a" style="left:620px;top:468px" width="12" height="11" viewBox="0 0 12 11"><rect x="0" y="0.2" width="12" height="1" fill="#333"/><path d="M0.5 2.5L4.5 4.5L0.5 6.5Z" fill="#3a6ab0"/><path d="M11.5 2.5L7.5 4.5L11.5 6.5Z" fill="#3a6ab0"/><rect x="0.5" y="2.2" width="3" height="5" fill="#3a6ab0"/><rect x="8.5" y="2.2" width="3" height="5" fill="#3a6ab0"/><path d="M6 1.5V9" stroke="#bbb" stroke-width="0.8"/><rect x="0" y="9.6" width="12" height="1.2" fill="#333"/></svg><svg class="a" style="left:256.5px;top:488px" width="7" height="11" viewBox="0 0 7 11"><path d="M0.5 0.5H6.5V10.5L3.5 7.8L0.5 10.5Z" fill="#6aa0d8" stroke="#4a80c0" stroke-width="0.6"/></svg><svg class="a" style="left:258.5px;top:754.5px" width="12" height="12" viewBox="0 0 12 12"><circle cx="6" cy="6" r="5.2" fill="#a4e4e0" stroke="#3a8a86" stroke-width="1"/></svg><svg class="a" style="left:277.5px;top:754.5px" width="12" height="12" viewBox="0 0 12 12"><rect x="1" y="1.5" width="8" height="9.5" fill="#f8f4f0" stroke="#c8c8c8" stroke-width="0.8"/><rect x="1" y="1.5" width="8" height="2.2" fill="#4a88c0"/><path d="M10.5 1L4.5 8.5" stroke="#333" stroke-width="1.8"/><path d="M4.5 8.5L3.8 10" stroke="#000" stroke-width="1"/></svg><svg class="a" style="left:1014px;top:758px" width="10" height="10" viewBox="0 0 10 10"><path d="M9.5 2L2 9.5M9.5 5L5 9.5M9.5 8L8 9.5" stroke="#a0a0a0" stroke-width="0.9"/></svg>
</body></html>
